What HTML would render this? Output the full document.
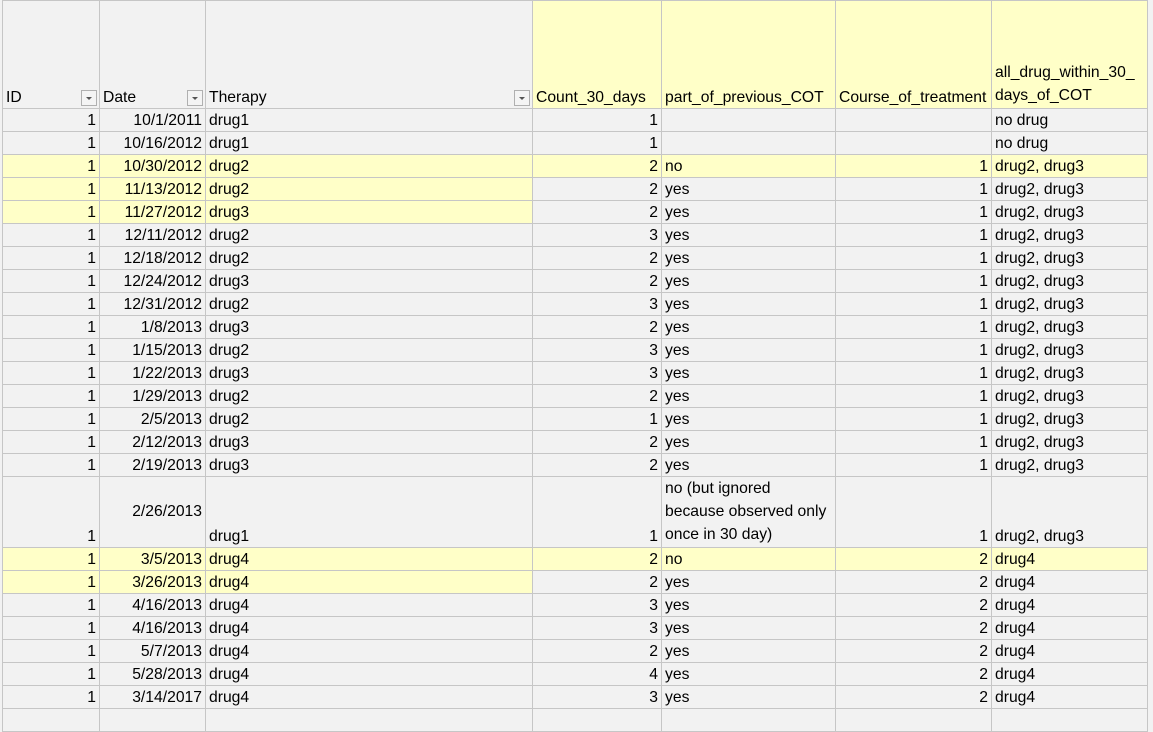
<!DOCTYPE html>
<html><head><style>
body{margin:0;width:1153px;height:714px;background:#f2f2f2;overflow:hidden;font-family:"Liberation Sans",sans-serif;font-size:15.7px;color:#000}
table{position:absolute;left:2px;top:0;border-collapse:collapse;table-layout:fixed}
td{border:1px solid #c6c6c6;height:21px;padding:0 3px 1px 3px;vertical-align:bottom;white-space:nowrap;overflow:hidden;line-height:19px;background:#f2f2f2}
td.r{text-align:right}
tr.h td{height:106px;position:relative}
.y{background:#ffffc8 !important}
tr.yy td{background:#ffffc8}
tr.t td{height:66px}
.fb{position:absolute;right:2px;bottom:2px;width:14px;height:14px;border:1px solid #b0b0b0;background:#f4f4f4}
.fb:after{content:"";position:absolute;left:4px;top:6px;border-left:3px solid transparent;border-right:3px solid transparent;border-top:3px solid #555}
.wrap{white-space:normal;line-height:23px}
</style></head><body>
<table>
<colgroup><col style="width:97px"><col style="width:106px"><col style="width:327px"><col style="width:129px"><col style="width:174px"><col style="width:156px"><col style="width:156px"></colgroup>
<tr class="h"><td>ID<span class="fb"></span></td><td>Date<span class="fb"></span></td><td>Therapy<span class="fb"></span></td><td class="y">Count_30_days</td><td class="y">part_of_previous_COT</td><td class="y">Course_of_treatment</td><td class="y wrap">all_drug_within_30_<br>days_of_COT</td></tr>
<tr><td class="r">1</td><td class="r">10/1/2011</td><td>drug1</td><td class="r">1</td><td></td><td></td><td>no drug</td></tr>
<tr><td class="r">1</td><td class="r">10/16/2012</td><td>drug1</td><td class="r">1</td><td></td><td></td><td>no drug</td></tr>
<tr class="yy"><td class="r">1</td><td class="r">10/30/2012</td><td>drug2</td><td class="r">2</td><td>no</td><td class="r">1</td><td>drug2, drug3</td></tr>
<tr><td class="r y">1</td><td class="r y">11/13/2012</td><td class="y">drug2</td><td class="r">2</td><td>yes</td><td class="r">1</td><td>drug2, drug3</td></tr>
<tr><td class="r y">1</td><td class="r y">11/27/2012</td><td class="y">drug3</td><td class="r">2</td><td>yes</td><td class="r">1</td><td>drug2, drug3</td></tr>
<tr><td class="r">1</td><td class="r">12/11/2012</td><td>drug2</td><td class="r">3</td><td>yes</td><td class="r">1</td><td>drug2, drug3</td></tr>
<tr><td class="r">1</td><td class="r">12/18/2012</td><td>drug2</td><td class="r">2</td><td>yes</td><td class="r">1</td><td>drug2, drug3</td></tr>
<tr><td class="r">1</td><td class="r">12/24/2012</td><td>drug3</td><td class="r">2</td><td>yes</td><td class="r">1</td><td>drug2, drug3</td></tr>
<tr><td class="r">1</td><td class="r">12/31/2012</td><td>drug2</td><td class="r">3</td><td>yes</td><td class="r">1</td><td>drug2, drug3</td></tr>
<tr><td class="r">1</td><td class="r">1/8/2013</td><td>drug3</td><td class="r">2</td><td>yes</td><td class="r">1</td><td>drug2, drug3</td></tr>
<tr><td class="r">1</td><td class="r">1/15/2013</td><td>drug2</td><td class="r">3</td><td>yes</td><td class="r">1</td><td>drug2, drug3</td></tr>
<tr><td class="r">1</td><td class="r">1/22/2013</td><td>drug3</td><td class="r">3</td><td>yes</td><td class="r">1</td><td>drug2, drug3</td></tr>
<tr><td class="r">1</td><td class="r">1/29/2013</td><td>drug2</td><td class="r">2</td><td>yes</td><td class="r">1</td><td>drug2, drug3</td></tr>
<tr><td class="r">1</td><td class="r">2/5/2013</td><td>drug2</td><td class="r">1</td><td>yes</td><td class="r">1</td><td>drug2, drug3</td></tr>
<tr><td class="r">1</td><td class="r">2/12/2013</td><td>drug3</td><td class="r">2</td><td>yes</td><td class="r">1</td><td>drug2, drug3</td></tr>
<tr><td class="r">1</td><td class="r">2/19/2013</td><td>drug3</td><td class="r">2</td><td>yes</td><td class="r">1</td><td>drug2, drug3</td></tr>
<tr class="t"><td class="r">1</td><td class="r" style="vertical-align:middle">2/26/2013</td><td>drug1</td><td class="r">1</td><td class="wrap">no (but ignored<br>because observed only<br>once in 30 day)</td><td class="r">1</td><td>drug2, drug3</td></tr>
<tr class="yy"><td class="r">1</td><td class="r">3/5/2013</td><td>drug4</td><td class="r">2</td><td>no</td><td class="r">2</td><td>drug4</td></tr>
<tr><td class="r y">1</td><td class="r y">3/26/2013</td><td class="y">drug4</td><td class="r">2</td><td>yes</td><td class="r">2</td><td>drug4</td></tr>
<tr><td class="r">1</td><td class="r">4/16/2013</td><td>drug4</td><td class="r">3</td><td>yes</td><td class="r">2</td><td>drug4</td></tr>
<tr><td class="r">1</td><td class="r">4/16/2013</td><td>drug4</td><td class="r">3</td><td>yes</td><td class="r">2</td><td>drug4</td></tr>
<tr><td class="r">1</td><td class="r">5/7/2013</td><td>drug4</td><td class="r">2</td><td>yes</td><td class="r">2</td><td>drug4</td></tr>
<tr><td class="r">1</td><td class="r">5/28/2013</td><td>drug4</td><td class="r">4</td><td>yes</td><td class="r">2</td><td>drug4</td></tr>
<tr><td class="r">1</td><td class="r">3/14/2017</td><td>drug4</td><td class="r">3</td><td>yes</td><td class="r">2</td><td>drug4</td></tr>
<tr><td></td><td></td><td></td><td></td><td></td><td></td><td></td></tr>
</table>
</body></html>
